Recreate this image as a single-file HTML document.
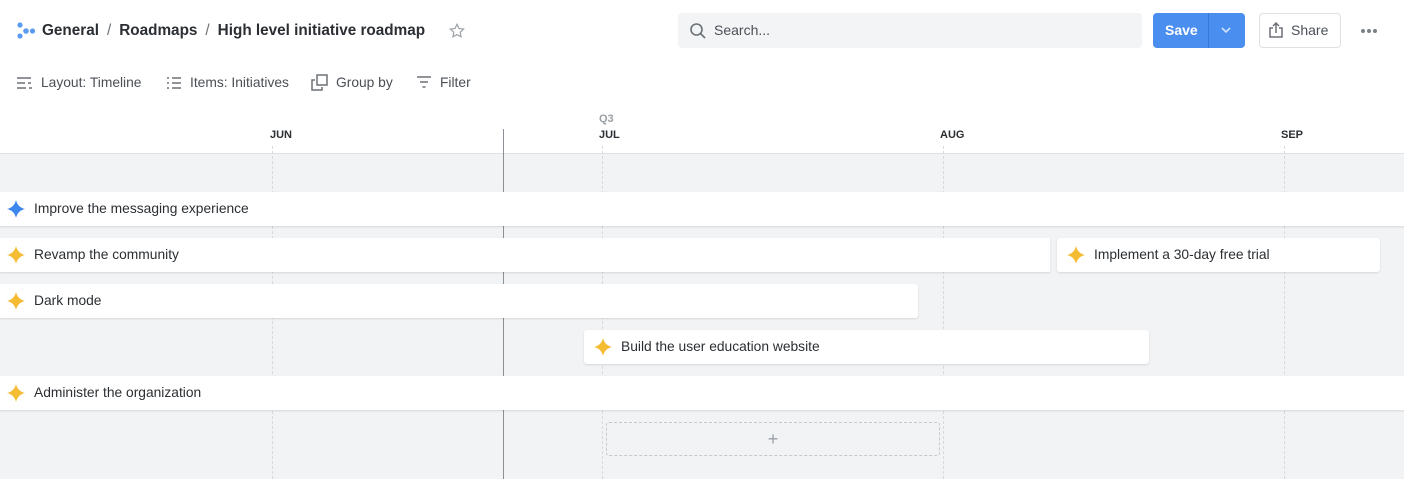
<!DOCTYPE html>
<html><head><style>
*{margin:0;padding:0;box-sizing:border-box}
body{width:1404px;height:479px;overflow:hidden;background:#fff;font-family:"Liberation Sans",sans-serif;color:#2b2f33;position:relative}
.a{position:absolute}
.crumb{left:42px;top:22px;font-size:15.3px;font-weight:bold;color:#2b2f33;white-space:nowrap}
.crumb span{color:#6b7177;font-weight:normal;margin:0 8px}
.tb{top:75px;font-size:13.8px;color:#4a5056;white-space:nowrap}
.mon{top:129px;font-size:11px;font-weight:bold;color:#2b2f33}
.grid{top:153px;height:326px;background:#f1f3f5;left:0;width:1404px;border-top:1px solid #dde1e5}
.dl{top:146px;bottom:0;width:0;border-left:1px dashed #d6dadf}
.bar{height:34px;background:#fff;box-shadow:0 1px 2px rgba(0,0,0,.12);font-size:13.8px;line-height:34px;padding-left:34px;white-space:nowrap}
.bar svg{position:absolute;left:7px;top:8px}
</style></head><body>
<svg class="a" style="left:16px;top:22px" width="20" height="18" viewBox="0 0 20 18"><g fill="#5b9cf0"><circle cx="4" cy="3" r="2.6"/><circle cx="4" cy="14" r="2.6"/><circle cx="10" cy="9" r="2.8"/><circle cx="16.5" cy="9" r="2.6"/></g></svg>
<div class="a crumb">General<span>/</span>Roadmaps<span>/</span>High level initiative roadmap</div>
<svg class="a" style="left:448px;top:22px" width="18" height="18" viewBox="0 0 24 24"><path d="M12 3l2.7 5.6 6.1.8-4.5 4.2 1.1 6.1L12 16.8 6.6 19.7l1.1-6.1L3.2 9.4l6.1-.8z" fill="none" stroke="#9aa0a6" stroke-width="1.6"/></svg>
<div class="a" style="left:678px;top:13px;width:464px;height:35px;background:#f3f4f6;border-radius:4px"></div>
<svg class="a" style="left:689px;top:22px" width="18" height="18" viewBox="0 0 18 18"><circle cx="7.5" cy="7.5" r="5.5" fill="none" stroke="#6b7177" stroke-width="1.6"/><path d="M11.5 11.5l4.5 4.5" stroke="#6b7177" stroke-width="1.6"/></svg>
<div class="a" style="left:714px;top:22px;font-size:14px;color:#4a5056">Search...</div>
<div class="a" style="left:1153px;top:13px;width:92px;height:35px;background:#4a8ef0;border-radius:4px"></div>
<div class="a" style="left:1208px;top:13px;width:1px;height:35px;background:#3a78d6"></div>
<div class="a" style="left:1165px;top:22px;font-size:14px;color:#fff;font-weight:bold">Save</div>
<svg class="a" style="left:1220px;top:25px" width="12" height="10"><path d="M2 3l4 4 4-4" fill="none" stroke="#cfe0fb" stroke-width="1.6"/></svg>
<div class="a" style="left:1259px;top:13px;width:82px;height:35px;border:1px solid #dde1e5;border-radius:4px"></div>
<svg class="a" style="left:1267px;top:21px" width="18" height="18" viewBox="0 0 18 18"><path d="M6 7H3v9h12V7h-3M9 12V2M6 5l3-3 3 3" fill="none" stroke="#6b7177" stroke-width="1.5"/></svg>
<div class="a" style="left:1291px;top:22px;font-size:14px;color:#4a5056">Share</div>
<svg class="a" style="left:1360px;top:28px" width="20" height="6"><g fill="#7a8087"><circle cx="3" cy="3" r="2"/><circle cx="9" cy="3" r="2"/><circle cx="15" cy="3" r="2"/></g></svg>
<svg class="a" style="left:16px;top:76px" width="18" height="14"><path d="M1 2h14M1 7h8M12 7h3M1 12h9M13 12h3" stroke="#6b7177" stroke-width="1.6"/></svg>
<div class="a tb" style="left:41px">Layout: Timeline</div>
<svg class="a" style="left:166px;top:76px" width="16" height="14"><path d="M1 2h2M6 2h9M1 7h2M6 7h9M1 12h2M6 12h9" stroke="#6b7177" stroke-width="1.6"/></svg>
<div class="a tb" style="left:190px">Items: Initiatives</div>
<svg class="a" style="left:311px;top:74px" width="18" height="18"><path d="M6 1h10v10H6zM4 6H1v10h10v-3" fill="none" stroke="#6b7177" stroke-width="1.5"/></svg>
<div class="a tb" style="left:336px">Group by</div>
<svg class="a" style="left:416px;top:75px" width="16" height="16"><path d="M1 2h14M4 7h8M6.5 12h3" stroke="#6b7177" stroke-width="1.6"/></svg>
<div class="a tb" style="left:440px">Filter</div>
<div class="a grid"></div>
<div class="a dl" style="left:272px"></div>
<div class="a dl" style="left:602px"></div>
<div class="a dl" style="left:943px"></div>
<div class="a dl" style="left:1284px"></div>
<div class="a" style="left:503px;top:129px;bottom:0;width:1px;background:#8a9096"></div>
<div class="a mon" style="left:270px">JUN</div>
<div class="a" style="left:599px;top:113px;font-size:11px;color:#9aa0a6;font-weight:bold">Q3</div>
<div class="a mon" style="left:599px">JUL</div>
<div class="a mon" style="left:940px">AUG</div>
<div class="a mon" style="left:1281px">SEP</div>
<div class="a bar" style="left:0;top:192px;width:1404px"><svg width="18" height="18" viewBox="0 0 16 16"><path d="M8 0Q9.5 6.5 16 8Q9.5 9.5 8 16Q6.5 9.5 0 8Q6.5 6.5 8 0z" fill="#3d86ee"/></svg>Improve the messaging experience</div>
<div class="a bar" style="left:0;top:238px;width:1050px"><svg width="18" height="18" viewBox="0 0 16 16"><path d="M8 0Q9.5 6.5 16 8Q9.5 9.5 8 16Q6.5 9.5 0 8Q6.5 6.5 8 0z" fill="#f5bb33"/></svg>Revamp the community</div>
<div class="a bar" style="left:1057px;top:238px;width:323px;padding-left:37px;border-radius:3px"><svg style="left:10px" width="18" height="18" viewBox="0 0 16 16"><path d="M8 0Q9.5 6.5 16 8Q9.5 9.5 8 16Q6.5 9.5 0 8Q6.5 6.5 8 0z" fill="#f5bb33"/></svg>Implement a 30-day free trial</div>
<div class="a bar" style="left:0;top:284px;width:918px;border-radius:0 3px 3px 0"><svg width="18" height="18" viewBox="0 0 16 16"><path d="M8 0Q9.5 6.5 16 8Q9.5 9.5 8 16Q6.5 9.5 0 8Q6.5 6.5 8 0z" fill="#f5bb33"/></svg>Dark mode</div>
<div class="a bar" style="left:584px;top:330px;width:565px;padding-left:37px;border-radius:3px"><svg style="left:10px" width="18" height="18" viewBox="0 0 16 16"><path d="M8 0Q9.5 6.5 16 8Q9.5 9.5 8 16Q6.5 9.5 0 8Q6.5 6.5 8 0z" fill="#f5bb33"/></svg>Build the user education website</div>
<div class="a bar" style="left:0;top:376px;width:1404px"><svg width="18" height="18" viewBox="0 0 16 16"><path d="M8 0Q9.5 6.5 16 8Q9.5 9.5 8 16Q6.5 9.5 0 8Q6.5 6.5 8 0z" fill="#f5bb33"/></svg>Administer the organization</div>
<div class="a" style="left:606px;top:422px;width:334px;height:34px;border:1px dashed #c4c9ce;border-radius:3px;text-align:center;line-height:32px;color:#9aa0a6;font-size:18px">+</div>
</body></html>
